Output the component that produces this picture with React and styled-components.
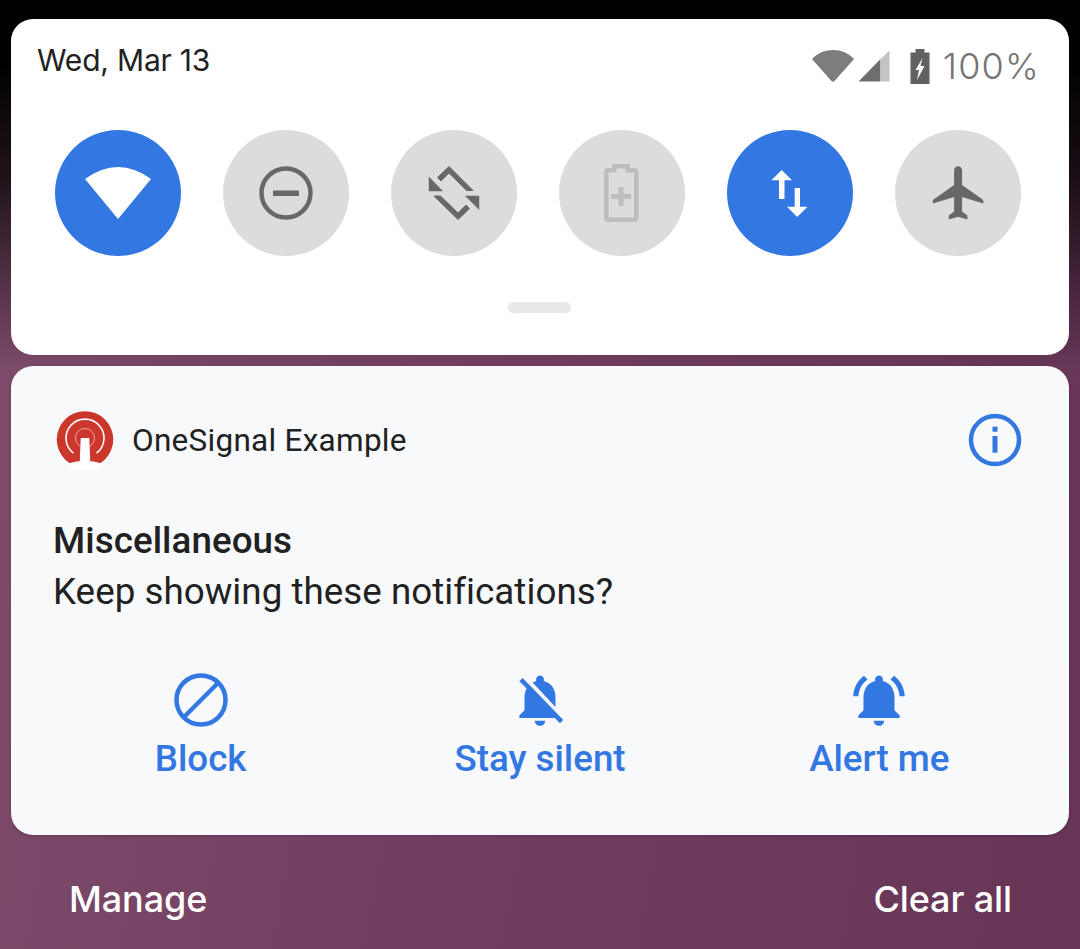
import React from "react";
import styled, { createGlobalStyle } from "styled-components";

const Global = createGlobalStyle`
  html, body { margin: 0; padding: 0; background: #000; }
  * { box-sizing: border-box; }
`;

const Page = styled.div`
  width: 1080px;
  height: 949px;
  overflow: hidden;
  padding: 19px 11px 0;
  display: flex;
  flex-direction: column;
  gap: 11px;
  font-family: Roboto, sans-serif;
  background:
    linear-gradient(to bottom, rgba(0,0,0,1) 0, rgba(0,0,0,1) 60px, rgba(0,0,0,0.75) 180px, rgba(0,0,0,0) 370px),
    linear-gradient(100deg, #7e4d6b 0%, #744062 40%, #673556 100%);
`;

const QuickPanel = styled.section`
  height: 336px;
  background: #fff;
  border-radius: 22px;
  padding: 23px 32px 0 26px;
  display: flex;
  flex-direction: column;
`;

const HeaderRow = styled.div`
  display: flex;
  justify-content: space-between;
  align-items: flex-start;
  height: 88px;
`;

const DateText = styled.div`
  font-family: Inter, sans-serif;
  font-size: 30px;
  line-height: 36px;
  color: #212121;
  letter-spacing: -0.2px;
`;

const StatusIcons = styled.div`
  display: flex;
  align-items: flex-start;
  margin-top: 7px;
`;

const StatusIcon = styled.svg`
  display: block;
  flex: none;
  margin-right: ${p => p.$mr}px;
`;

const Percent = styled.span`
  font-family: Inter, sans-serif;
  font-weight: 300;
  font-size: 36px;
  letter-spacing: 1.2px;
  line-height: 44px;
  color: #747474;
  margin: -5px -3px 0 0;
`;

const TileRow = styled.div`
  display: flex;
  gap: 42px;
  padding-left: 18px;
`;

const Tile = styled.div`
  width: 126px;
  height: 126px;
  border-radius: 50%;
  background: ${p => (p.$active ? "#3277e2" : "#dcdcdc")};
  display: flex;
  align-items: center;
  justify-content: center;
  flex: none;
`;

const TileIcon = styled.svg`
  display: block;
  width: 80px;
  height: 80px;
`;

const Handle = styled.div`
  width: 63px;
  height: 11px;
  border-radius: 6px;
  background: #e8e8e8;
  margin: 46px 0 0 471px;
`;

const NotificationCard = styled.section`
  height: 469px;
  background: #f7f9fb;
  border-radius: 22px;
  display: flex;
  flex-direction: column;
  box-shadow: 0 1px 3px rgba(0,0,0,0.2);
`;

const AppRow = styled.div`
  height: 56px;
  margin-top: 46px;
  padding: 0 46px 0 44px;
  display: flex;
  align-items: center;
`;

const AppLogo = styled.svg`
  display: block;
  width: 60px;
  height: 60px;
  flex: none;
`;

const AppName = styled.span`
  font-size: 31.5px;
  letter-spacing: 0.27px;
  color: #212121;
  margin-left: 17px;
  flex: 1;
`;

const InfoIcon = styled.svg`
  display: block;
  width: 56px;
  height: 56px;
  flex: none;
`;

const Message = styled.div`
  padding: 51px 0 0 42px;
`;

const Title = styled.div`
  font-size: 36.75px;
  letter-spacing: 0.07px;
  line-height: 44px;
  font-weight: 500;
  color: #212121;
`;

const Body = styled.div`
  font-size: 36.75px;
  letter-spacing: 0.03px;
  line-height: 44px;
  color: #212121;
  margin-top: 7px;
`;

const Actions = styled.div`
  display: grid;
  grid-template-columns: repeat(3, 1fr);
  padding: 0 20px;
  margin-top: 55px;
`;

const Action = styled.div`
  display: flex;
  flex-direction: column;
  align-items: center;
  color: #3277e2;
`;

const ActionIcon = styled.svg`
  display: block;
  width: 62px;
  height: 62px;
  fill: #3277e2;
`;

const ActionLabel = styled.span`
  font-size: 36.75px;
  line-height: 44px;
  font-weight: 500;
  margin-top: 6px;
`;

const Footer = styled.div`
  display: flex;
  justify-content: space-between;
  padding: 0 57px 0 58px;
  margin-top: 29px;
`;

const FooterButton = styled.span`
  font-family: Inter, sans-serif;
  font-weight: 500;
  font-size: 36px;
  letter-spacing: -0.1px;
  line-height: 48px;
  color: #fff;
`;

const GREY = "#686868";

export default function App() {
  return (
    <Page>
      <Global />
      <QuickPanel>
        <HeaderRow>
          <DateText>Wed, Mar 13</DateText>
          <StatusIcons>
            <StatusIcon $mr={4} width="42" height="33" viewBox="0 0 42 33">
              <path d="M1 10 C12 -1 30 -1 41 10 L22 31.5 Q21 32.5 20 31.5 Z" fill="#7d7d7d" stroke="#7d7d7d" strokeWidth="1.5" strokeLinejoin="round" />
            </StatusIcon>
            <StatusIcon $mr={20} width="32" height="33" viewBox="0 0 32 33">
              <path d="M0.5 32.5 L22.5 10 V32.5 Z" fill="#6e6e6e" />
              <path d="M22.5 10 L31.5 1.5 V32.5 H22.5 Z" fill="#c4c4c4" />
            </StatusIcon>
            <StatusIcon $mr={13} width="20" height="36" viewBox="0 0 20 36">
              <path d="M5.5 0 H14.5 V3.5 H19.5 V35 H0.5 V3.5 H5.5 Z" fill="#616161" />
              <path d="M12.5 9 L5.5 21 H9 L7 31 L14.5 17 H10.5 Z" fill="#fff" />
            </StatusIcon>
            <Percent>100%</Percent>
          </StatusIcons>
        </HeaderRow>
        <TileRow>
          <Tile $active>
            <TileIcon viewBox="-40 -40 80 80">
              <path d="M-33 -14 Q0 -38 33 -14 L0 26 Z" fill="#fff" />
            </TileIcon>
          </Tile>
          <Tile>
            <TileIcon viewBox="-40 -40 80 80">
              <circle r="24.5" fill="none" stroke={GREY} strokeWidth="4.5" />
              <rect x="-13" y="-2.5" width="26" height="5.5" fill={GREY} />
            </TileIcon>
          </Tile>
          <Tile>
            <TileIcon viewBox="-40 -40 80 80">
              <path d="M-5 -26.5 L19 -2.5 H12.5 L-5 -20 L-13 -12 L-16.5 -15.5 Z" fill={GREY} stroke={GREY} strokeWidth="1" strokeLinejoin="round" />
              <path d="M-25 -16 V-2 H-11.5 Z" fill={GREY} stroke={GREY} strokeWidth="0.5" />
              <path d="M4 26.5 L-20 3 H-13.5 L4 20 L12 12 L15.5 15.5 Z" fill={GREY} stroke={GREY} strokeWidth="1" strokeLinejoin="round" />
              <path d="M25 3 V16.5 L11.5 3 Z" fill={GREY} stroke={GREY} strokeWidth="0.5" />
            </TileIcon>
          </Tile>
          <Tile>
            <TileIcon viewBox="-40 -40 80 80">
              <path d="M-7.7 -26.7 H5.7 V-22.7 H12.3 Q14.3 -22.7 14.3 -20.7 V24.7 Q14.3 26.7 12.3 26.7 H-13.7 Q-15.7 26.7 -15.7 24.7 V-20.7 Q-15.7 -22.7 -13.7 -22.7 H-7.7 Z" fill="none" stroke="#bdbdbd" strokeWidth="4.5" />
              <path d="M-2.5 -6 H2.5 V1 H10 V6 H2.5 V13 H-2.5 V6 H-10 V1 H-2.5 Z" fill="#bdbdbd" transform="translate(-1 0)" />
            </TileIcon>
          </Tile>
          <Tile $active>
            <TileIcon viewBox="-40 -40 80 80">
              <path d="M-8.3 -23 L2 -12.7 H-5.5 V6 H-11 V-12.7 H-18.6 Z" fill="#fff" />
              <path d="M7.2 24 L17.5 13.7 H10 V-5 H4.7 V13.7 H-3 Z" fill="#fff" />
            </TileIcon>
          </Tile>
          <Tile>
            <TileIcon viewBox="-40 -40 80 80">
              <path transform="translate(-30.5 -32) scale(2.66)" d="M21 16v-.8c0-.3-.1-.6-.4-.8L13 9V3.5c0-.83-.67-1.5-1.5-1.5S10 2.67 10 3.5V9l-7.6 5.4c-.3.2-.4.5-.4.8v.8l8-2.5V19l-2 1.5V22l3.5-1 3.5 1v-1.5L13 19v-5.5l8 2.5z" fill={GREY} />
            </TileIcon>
          </Tile>
        </TileRow>
        <Handle />
      </QuickPanel>
      <NotificationCard>
        <AppRow>
          <AppLogo viewBox="0 0 60 60">
            <circle cx="30" cy="30" r="29.5" fill="#fff" />
            <circle cx="30" cy="29.5" r="28.3" fill="#cb372c" />
            <path d="M13 53.5 Q30 48 47 53.5 L44 60 H16 Z" fill="#fff" />
            <path d="M18.5 43.2 A19 19 0 1 1 41.5 43.2" fill="none" stroke="#fff" strokeWidth="1.6" />
            <circle cx="30" cy="28" r="9.5" fill="none" stroke="#eea69e" strokeWidth="1" />
            <path d="M25.7 28 H34.3 L35.2 51 H24.8 Z" fill="#fff" />
          </AppLogo>
          <AppName>OneSignal Example</AppName>
          <InfoIcon viewBox="0 0 56 56">
            <circle cx="28" cy="28" r="24" fill="none" stroke="#3277e2" strokeWidth="4.5" />
            <rect x="25.5" y="24" width="5" height="16.7" fill="#3277e2" />
            <rect x="25.5" y="14.7" width="5" height="5" fill="#3277e2" />
          </InfoIcon>
        </AppRow>
        <Message>
          <Title>Miscellaneous</Title>
          <Body>Keep showing these notifications?</Body>
        </Message>
        <Actions>
          <Action>
            <ActionIcon viewBox="0 0 62 62">
              <circle cx="31" cy="31" r="24.5" fill="none" stroke="#3277e2" strokeWidth="4.5" />
              <path d="M14 48 L48 14" stroke="#3277e2" strokeWidth="4.5" />
            </ActionIcon>
            <ActionLabel>Block</ActionLabel>
          </Action>
          <Action>
            <ActionIcon viewBox="0 0 24 24">
              <path d="M20 18.69L7.84 6.14 5.27 3.49 4 4.76l2.8 2.8v.01c-.52.99-.8 2.16-.8 3.42v5l-2 2v1h13.73l2 2L21 19.72l-1-1.03zM12 22c1.11 0 2-.89 2-2h-4c0 1.11.89 2 2 2zm6-7.32V11c0-3.08-1.64-5.64-4.5-6.32V4c0-.83-.67-1.5-1.5-1.5s-1.5.67-1.5 1.5v.68c-.15.03-.29.08-.42.12-.1.03-.2.07-.3.11h-.01c-.2.08-.4.17-.59.27-.01 0-.01 0-.02.01L18 14.68z" />
            </ActionIcon>
            <ActionLabel>Stay silent</ActionLabel>
          </Action>
          <Action>
            <ActionIcon viewBox="0 0 24 24">
              <path d="M7.58 4.08L6.15 2.65C3.75 4.48 2.17 7.3 2.03 10.5h2c.15-2.65 1.51-4.97 3.55-6.42zm12.39 6.42h2c-.15-3.2-1.73-6.02-4.12-7.85l-1.42 1.43c2.02 1.45 3.39 3.77 3.54 6.42zM18 11c0-3.07-1.64-5.64-4.5-6.32V4c0-.83-.67-1.5-1.5-1.5s-1.5.67-1.5 1.5v.68C7.63 5.36 6 7.92 6 11v5l-2 2v1h16v-1l-2-2v-5zm-6 11c.14 0 .27-.01.4-.04.65-.14 1.18-.58 1.44-1.18.1-.24.15-.5.15-.78h-4c.01 1.1.9 2 2.01 2z" />
            </ActionIcon>
            <ActionLabel>Alert me</ActionLabel>
          </Action>
        </Actions>
      </NotificationCard>
      <Footer>
        <FooterButton>Manage</FooterButton>
        <FooterButton>Clear all</FooterButton>
      </Footer>
    </Page>
  );
}
